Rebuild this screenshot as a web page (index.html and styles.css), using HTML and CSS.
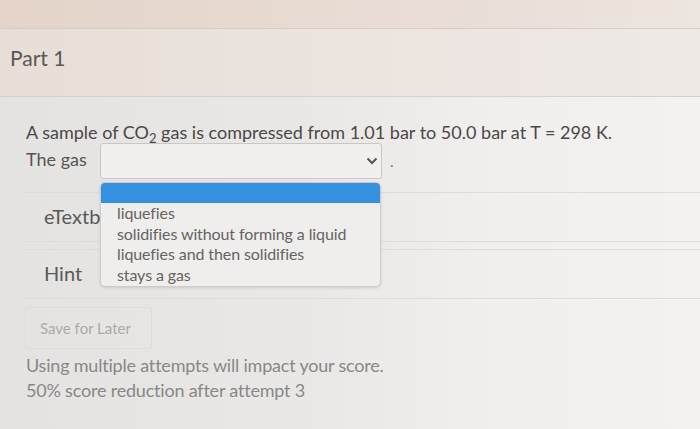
FILE: index.html
```html
<!DOCTYPE html>
<html>
<head>
<meta charset="utf-8">
<link rel="stylesheet" href="styles.css">
</head>
<body>
<div class="page">
  <div class="topbar"></div>
  <div class="part-header">Part 1</div>
  <div class="content">
    <p class="question">A sample of CO<sub>2</sub> gas is compressed from 1.01 bar to 50.0 bar at T = 298 K.</p>
    <div class="answer-row">
      <span class="label">The gas</span>
      <div class="select-wrap">
        <div class="select">
          <svg class="chev" width="12" height="8" viewBox="0 0 12 8"><path d="M1.5 1.5 L6 6 L10.5 1.5" fill="none" stroke="#555" stroke-width="2"/></svg>
        </div>
        <div class="dropdown">
          <div class="dd-blank"></div>
          <ul class="dd-list">
            <li>liquefies</li>
            <li>solidifies without forming a liquid</li>
            <li>liquefies and then solidifies</li>
            <li>stays a gas</li>
          </ul>
        </div>
      </div>
      <span class="period">.</span>
    </div>
    <div class="resources">
      <div class="res-box res-etext"><span class="clip">eTextbook and Media</span></div>
      <div class="res-box res-hint">Hint</div>
    </div>
    <div class="save-btn">Save for Later</div>
    <p class="attempts">Using multiple attempts will impact your score.<br>50% score reduction after attempt 3</p>
  </div>
</div>
</body>
</html>
```

FILE: styles.css
```css
html, body {
  margin: 0;
  padding: 0;
}
body {
  width: 700px;
  height: 429px;
  overflow: hidden;
  font-family: Lato, "Open Sans", sans-serif;
  background: linear-gradient(90deg, #e5e3e2 0%, #e9e8e7 45%, #f0efee 70%, #f3f2f1 100%);
}
.page {
  position: relative;
  height: 429px;
}
.topbar {
  height: 28px;
  background: linear-gradient(90deg, #e4d4ca 0%, #e9ddd5 60%, #ede5df 100%);
  border-bottom: 1px solid #d9ccc4;
}
.part-header {
  height: 68px;
  box-sizing: border-box;
  padding-left: 10px;
  line-height: 58px;
  font-size: 21px;
  color: #5a5757;
  background: linear-gradient(90deg, #e8ded7 0%, #ebe4df 50%, #efe9e6 100%);
  border-bottom: 1px solid #d8d0cb;
}
.content {
  padding: 0 0 0 26px;
}
.question {
  margin: 24px 0 0;
  font-size: 18px;
  line-height: 22px;
  color: #4a4848;
}
.question sub {
  font-size: 13px;
  line-height: 0;
  vertical-align: -4px;
}
.answer-row {
  display: flex;
  align-items: center;
  height: 36px;
}
.label {
  font-size: 18px;
  color: #555;
  width: 74px;
  position: relative;
  top: -2px;
}
.select-wrap {
  position: relative;
  width: 282px;
  height: 36px;
}
.select {
  box-sizing: border-box;
  height: 36px;
  border: 1px solid #c9c6c4;
  border-radius: 3px;
  background: #f1f0ef;
  display: flex;
  align-items: center;
  justify-content: flex-end;
  padding-right: 3px;
}
.period {
  margin-left: 8px;
  color: #777;
  font-size: 15px;
}
.dropdown {
  position: absolute;
  z-index: 5;
  top: 39px;
  left: 0;
  width: 281px;
  height: 105px;
  background: #efeeed;
  border: 1px solid #cfcccb;
  border-radius: 5px;
  box-sizing: border-box;
  overflow: hidden;
  box-shadow: 0 1px 3px rgba(0,0,0,0.12);
}
.dd-blank {
  height: 20px;
  background: #3391df;
}
.dd-list {
  list-style: none;
  margin: 0;
  padding: 0 0 0 16px;
  font-size: 16px;
  line-height: 20.5px;
  color: #666363;
  letter-spacing: -0.1px;
}
.resources {
  margin: 13px 0 0 -4px;
  display: flex;
  flex-direction: column;
  gap: 7px;
}
.res-box {
  height: 50px;
  box-sizing: border-box;
  border-top: 1px solid #dedbd9;
  border-bottom: 1px solid #dedbd9;
  padding: 0 0 2px 22px;
  font-size: 20px;
  color: #5a5858;
  display: flex;
  align-items: center;
}
.clip {
  display: block;
  width: 56px;
  overflow: hidden;
  white-space: nowrap;
}
.save-btn {
  margin: 8px 0 0 -1px;
  width: 127px;
  height: 42px;
  box-sizing: border-box;
  border: 1px solid #dedbd9;
  border-radius: 3px;
  padding-left: 14px;
  font-size: 15px;
  color: #acaaa9;
  display: flex;
  align-items: center;
}
.attempts {
  margin: 4px 0 0;
  font-size: 18px;
  line-height: 25px;
  color: #8a8786;
  letter-spacing: -0.2px;
}
```
